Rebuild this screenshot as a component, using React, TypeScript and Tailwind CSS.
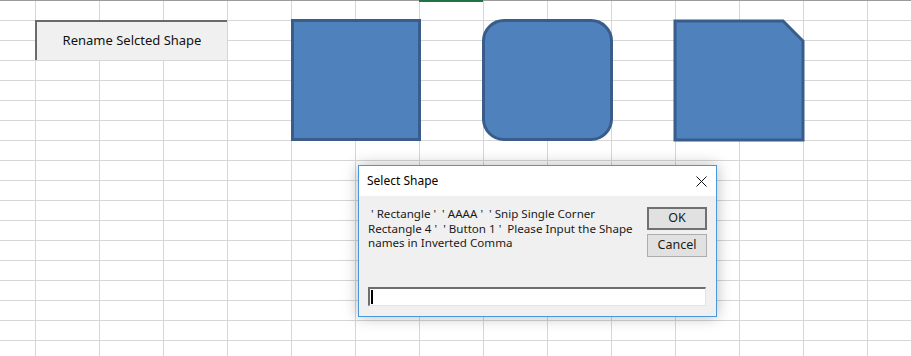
const COLS = 15
const ROWS = 18

const font = { fontFamily: '"Noto Sans", "Open Sans", sans-serif' }

const promptLines = [
  " ' Rectangle '  ' AAAA '  ' Snip Single Corner",
  "Rectangle 4 '  ' Button 1 '  Please Input the Shape",
  "names in Inverted Comma",
]

function SheetGrid() {
  return (
    <div className="absolute inset-0 border-t border-[#9b9b9b]">
      <div className="grid grid-cols-[36px_repeat(14,64px)]">
        {Array.from({ length: COLS * ROWS }).map((_, i) => (
          <div key={i} className="h-[20px] border-r border-b border-[#d6d6d6]" />
        ))}
      </div>
    </div>
  )
}

function Dialog() {
  return (
    <div
      className="absolute left-[358px] top-[165px] w-[359px] h-[152px] border border-[#4a97dc] bg-[#f0f0f0] shadow-[0_0_14px_rgba(0,0,0,0.28)] flex flex-col text-[#1a1a1a]"
      style={font}
    >
      <div className="h-[30px] bg-white flex items-center justify-between pl-[8px] pr-[9px]">
        <span className="text-[12px] text-black">Select Shape</span>
        <svg width="11" height="11" viewBox="0 0 11 11">
          <path d="M0.5 0.5 L10.5 10.5 M10.5 0.5 L0.5 10.5" stroke="#111" strokeWidth="1" />
        </svg>
      </div>
      <div className="flex-1 flex pt-[11px] pl-[9px] pr-[9px]">
        <div className="text-[11.6px] leading-[14.5px] whitespace-pre">
          {promptLines.map((line) => (
            <div key={line}>{line}</div>
          ))}
        </div>
        <div className="ml-auto flex flex-col gap-[4px]">
          <button className="w-[60px] h-[23px] bg-[#e1e1e1] border-2 border-[#707070] text-[12.5px] leading-none">OK</button>
          <button className="w-[60px] h-[23px] bg-[#e1e1e1] border border-[#adadad] text-[12.5px] leading-none">Cancel</button>
        </div>
      </div>
      <div className="pl-[9px] pr-[10px] pb-[10px]">
        <div className="h-[19px] bg-white border-t-2 border-l-2 border-[#6e6e6e] border-r border-b border-r-[#e3e3e3] border-b-[#e3e3e3] flex items-center pl-[1px]">
          <div className="w-[2px] h-[14px] bg-black" />
        </div>
      </div>
    </div>
  )
}

export default function App() {
  return (
    <div className="relative w-[911px] h-[356px] overflow-hidden bg-white">
      <SheetGrid />
      <div className="absolute left-[419px] top-0 w-[64px] h-[2px] bg-[#217346]" />

      <button
        className="absolute left-[35px] top-[20px] w-[192px] h-[40px] bg-[#f0f0f0] border-t-2 border-l-2 border-[#6a6a6a] text-[13px] text-[#111]"
        style={font}
      >
        Rename Selcted Shape
      </button>

      <div className="absolute left-[291px] top-[19px] w-[130px] h-[122px] bg-[#4f81bd] border-[3px] border-[#385d8a]" />
      <div className="absolute left-[482px] top-[19px] w-[131px] h-[122px] bg-[#4f81bd] border-[3px] border-[#385d8a] rounded-[22px]" />
      <svg className="absolute left-[673px] top-[19px]" width="133" height="123" viewBox="0 0 133 123">
        <polygon points="2,2 110,2 130,22 130,121 2,121" fill="#4f81bd" stroke="#385d8a" strokeWidth="3" />
      </svg>

      <Dialog />
    </div>
  )
}
